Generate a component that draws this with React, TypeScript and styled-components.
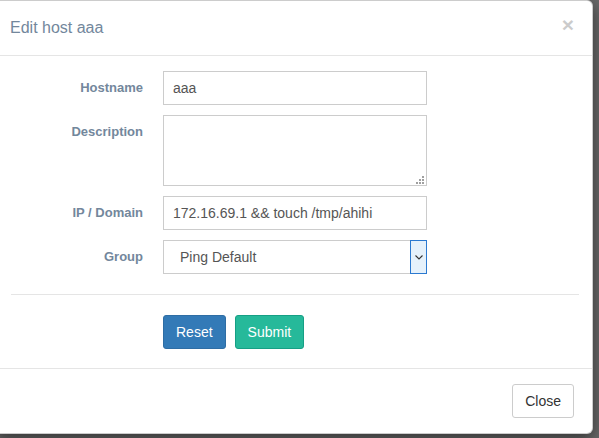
import React from "react";
import styled, { createGlobalStyle } from "styled-components";

const GlobalStyle = createGlobalStyle`
  html, body {
    margin: 0;
    padding: 0;
    height: 100%;
    overflow: hidden;
  }
  body {
    background: #686868;
    font-family: "Liberation Sans", Arial, sans-serif;
  }
  * {
    box-sizing: border-box;
  }
`;

export const Backdrop = styled.div`
  min-height: 100vh;
  background: #686868;
`;

export const Modal = styled.div`
  width: 598px;
  margin-left: -5px;
  background: #fff;
  border: 1px solid rgba(0, 0, 0, 0.2);
  border-radius: 6px;
  box-shadow: 0 5px 15px rgba(0, 0, 0, 0.5);
`;

export const Header = styled.div`
  display: flex;
  justify-content: space-between;
  align-items: flex-start;
  padding: 14px 18px 14px 14px;
  border-bottom: 1px solid #e5e5e5;
`;

export const Title = styled.h4`
  margin: 0;
  font-size: 16px;
  line-height: 26px;
  font-weight: 400;
  color: #73879c;
`;

export const CloseX = styled.button`
  border: 0;
  background: transparent;
  padding: 0;
  margin: -1px 0 0;
  font-family: "Liberation Sans", Arial, sans-serif;
  font-size: 21px;
  font-weight: 700;
  line-height: 1;
  color: #000;
  opacity: 0.2;
  cursor: pointer;
`;

export const Body = styled.div`
  padding: 15px 13px 19px 15px;
`;

export const FormRow = styled.div`
  display: grid;
  grid-template-columns: 152px 264px;
  margin-bottom: 10px;
`;

export const Label = styled.label`
  padding: 8px 20px 0 0;
  text-align: right;
  font-size: 13px;
  line-height: 18px;
  font-weight: 700;
  color: #73879c;
`;

export const TextInput = styled.input`
  width: 264px;
  height: 34px;
  padding: 6px 9px;
  border: 1px solid #ccc;
  border-radius: 0;
  font-family: "Liberation Sans", Arial, sans-serif;
  font-size: 14px;
  line-height: 20px;
  color: #555;
  outline: none;
`;

export const AreaWrap = styled.div`
  position: relative;
  width: 264px;
  height: 71px;
`;

export const TextArea = styled.textarea`
  display: block;
  width: 100%;
  height: 100%;
  padding: 6px 9px;
  border: 1px solid #ccc;
  border-radius: 0;
  resize: none;
  font-family: "Liberation Sans", Arial, sans-serif;
  font-size: 14px;
  color: #555;
  outline: none;
`;

export const Grip = styled.svg`
  position: absolute;
  right: 3px;
  bottom: 2px;
`;

export const SelectBox = styled.div`
  display: flex;
  align-items: stretch;
  width: 264px;
  height: 34px;
  border: 1px solid #ccc;
  font-size: 14px;
  color: #555;
`;

export const SelectText = styled.span`
  flex: 1;
  padding-left: 16px;
  line-height: 32px;
`;

export const ArrowBox = styled.span`
  display: flex;
  align-items: center;
  justify-content: center;
  width: 17px;
  margin: -1px -1px -1px 0;
  border: 1px solid #2b79d0;
  background: #e5f1fb;
`;

export const Divider = styled.div`
  height: 1px;
  background: #e5e5e5;
  margin: 20px 0;
`;

export const ButtonRow = styled.div`
  display: flex;
  gap: 9px;
  padding-left: 152px;
`;

const palette = {
  primary: { bg: "#337ab7", border: "#2e6da4", color: "#fff" },
  success: { bg: "#26b99a", border: "#169f85", color: "#fff" },
  default: { bg: "#fff", border: "#ccc", color: "#333" },
};

export const Button = styled.button<{ $variant: keyof typeof palette }>`
  height: 34px;
  padding: 6px 12px;
  border-radius: 3px;
  border: 1px solid ${({ $variant }) => palette[$variant].border};
  background: ${({ $variant }) => palette[$variant].bg};
  color: ${({ $variant }) => palette[$variant].color};
  font-family: "Liberation Sans", Arial, sans-serif;
  font-size: 14px;
  line-height: 20px;
  cursor: pointer;
`;

export const Footer = styled.div`
  display: flex;
  justify-content: flex-end;
  padding: 15px 18px 15px 15px;
  border-top: 1px solid #e5e5e5;
`;

const gripDots = [
  [6, 0],
  [3, 3],
  [6, 3],
  [0, 6],
  [3, 6],
  [6, 6],
];

const EditHostModal = () => {
  return (
    <Backdrop>
      <Modal>
        <Header>
          <Title>Edit host aaa</Title>
          <CloseX>×</CloseX>
        </Header>

        <Body>
          <form>
            <FormRow>
              <Label>Hostname</Label>
              <TextInput defaultValue="aaa" />
            </FormRow>

            <FormRow>
              <Label>Description</Label>
              <AreaWrap>
                <TextArea />
                <Grip width="8" height="8" viewBox="0 0 8 8">
                  {gripDots.map(([x, y]) => (
                    <rect key={`${x}-${y}`} x={x} y={y} width="2" height="2" fill="#a0a0a0" />
                  ))}
                </Grip>
              </AreaWrap>
            </FormRow>

            <FormRow>
              <Label>IP / Domain</Label>
              <TextInput defaultValue="172.16.69.1 && touch /tmp/ahihi" />
            </FormRow>

            <FormRow>
              <Label>Group</Label>
              <SelectBox>
                <SelectText>Ping Default</SelectText>
                <ArrowBox>
                  <svg width="8" height="5" viewBox="0 0 8 5">
                    <path d="M0.5 0.5 L4 4 L7.5 0.5" fill="none" stroke="#333" strokeWidth="1.1" />
                  </svg>
                </ArrowBox>
              </SelectBox>
            </FormRow>

            <Divider />

            <ButtonRow>
              <Button type="button" $variant="primary">Reset</Button>
              <Button type="button" $variant="success">Submit</Button>
            </ButtonRow>
          </form>
        </Body>

        <Footer>
          <Button type="button" $variant="default">Close</Button>
        </Footer>
      </Modal>
    </Backdrop>
  );
};

export default function App() {
  return (
    <>
      <GlobalStyle />
      <EditHostModal />
    </>
  );
}
